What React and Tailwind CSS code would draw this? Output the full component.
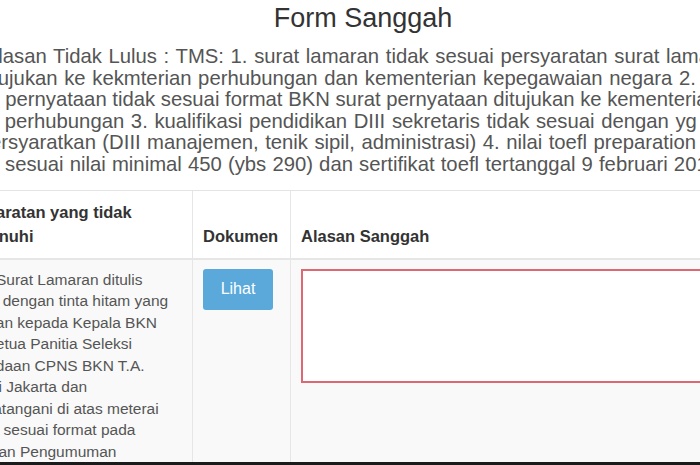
import React from "react";

// tiap baris alasan dipecah seperti pada halaman aslinya
const alasanLines = [
  { text: "Alasan Tidak Lulus : TMS: 1. surat lamaran tidak sesuai persyaratan surat lamaran", cls: "[word-spacing:1px]" },
  { text: "ditujukan ke kekmterian perhubungan dan kementerian kepegawaian negara 2. surat", cls: "[word-spacing:1px]" },
  { text: "pernyataan tidak sesuai format BKN surat pernyataan ditujukan ke kementerian", cls: "" },
  { text: "perhubungan 3. kualifikasi pendidikan DIII sekretaris tidak sesuai dengan yg di", cls: "[word-spacing:1px]" },
  { text: "persyaratkan (DIII manajemen, tenik sipil, administrasi) 4. nilai toefl preparation tidak", cls: "[word-spacing:0.8px]" },
  { text: "sesuai nilai minimal 450 (ybs 290) dan sertifikat toefl tertanggal 9 februari 2017", cls: "[word-spacing:0.5px]" },
];

const syaratLines = [
  "tangan dengan tinta hitam yang",
  "ditujukan kepada Kepala BKN",
  "atau Ketua Panitia Seleksi",
  "Pengadaan CPNS BKN T.A.",
  "2017 di Jakarta dan",
  "ditandatangani di atas meterai",
  "6.000,- sesuai format pada",
  "Lampiran Pengumuman",
];

export default function App() {
  return (
    <div className="w-[700px] h-[465px] overflow-hidden bg-white border-b-[3px] border-[#1b1b1b] font-['Liberation_Sans',Arial,sans-serif]">
      {/* Judul dan alasan */}
      <div className="w-[1200px] -ml-[238px] text-center">
        <h1 className="pt-[2px] pl-[2px] text-[27px] leading-[32px] text-[#333]">
          Form Sanggah
        </h1>
        <div className="mt-[12px] text-[20.3px] leading-[21.6px] text-[#555] whitespace-nowrap">
          {alasanLines.map((line) => (
            <div key={line.text} className={line.cls}>
              {line.text}
            </div>
          ))}
        </div>
      </div>

      {/* Tabel sanggah */}
      <div className="mt-[14px] -ml-[59px] w-[1100px] grid grid-cols-[251px_98px_1fr] border-t border-[#e4e4e4]">
        <div className="px-[10px] pt-[9px] pb-[10px] flex items-end border-b-2 border-[#e6e6e6] font-bold text-[16.5px] leading-[24px] text-[#333]">
          Persyaratan yang tidak memenuhi
        </div>
        <div className="px-[10px] pt-[9px] pb-[10px] flex items-end border-l border-b-2 border-[#e6e6e6] font-bold text-[16.5px] leading-[24px] text-[#333]">
          Dokumen
        </div>
        <div className="px-[10px] pt-[9px] pb-[10px] flex items-end border-l border-b-2 border-[#e6e6e6] font-bold text-[16.5px] leading-[24px] text-[#333]">
          Alasan Sanggah
        </div>

        <div className="bg-[#f9f9f9] px-[10px] pt-[9px] pb-[10px] text-[15.5px] leading-[21.5px] text-[#555] whitespace-nowrap">
          <span className="inline-block w-[45px]">1.</span>
          Surat Lamaran ditulis
          {syaratLines.map((line) => (
            <div key={line}>{line}</div>
          ))}
        </div>
        <div className="bg-[#f9f9f9] px-[10px] pt-[9px] border-l border-[#e6e6e6]">
          <button
            type="button"
            className="w-[70px] h-[41px] rounded-[3px] bg-[#5aa9da] text-white text-[16px]"
          >
            Lihat
          </button>
        </div>
        <div className="bg-[#f9f9f9] px-[10px] pt-[9px] border-l border-[#e6e6e6]">
          <textarea
            readOnly
            className="block w-full h-[114px] resize-none bg-white border-2 border-[#dc6874] outline-none"
          />
        </div>
      </div>
    </div>
  );
}
